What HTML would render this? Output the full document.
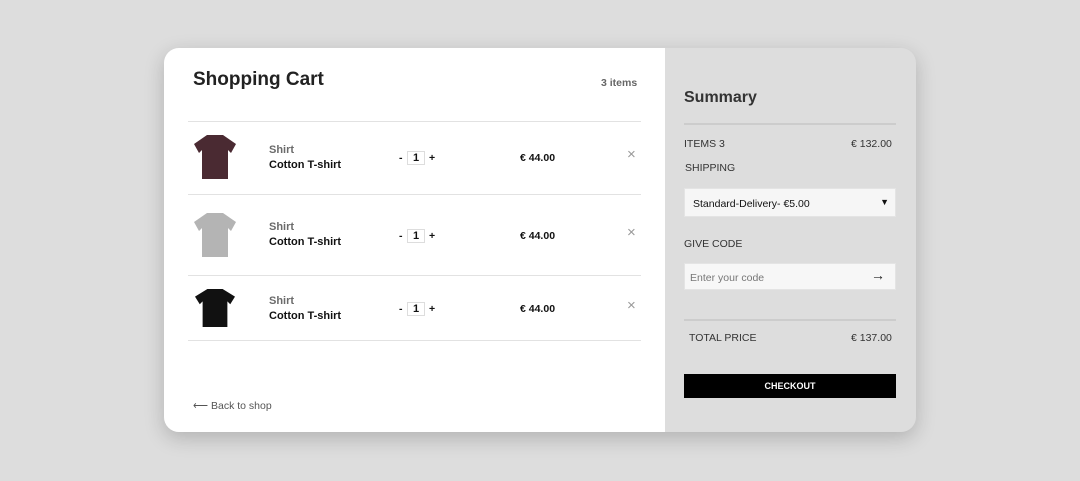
<!DOCTYPE html>
<html><head><meta charset="utf-8"><style>
*{margin:0;padding:0;box-sizing:border-box}
body{width:1080px;height:481px;background:#dddddd;font-family:"Liberation Sans",Arial,sans-serif;position:relative;overflow:hidden}
.card{position:absolute;left:164px;top:48px;width:752px;height:384px;border-radius:15px;overflow:hidden;box-shadow:0 6px 20px rgba(0,0,0,.2);background:#ddd}
.left{position:absolute;left:0;top:0;width:501px;height:384px;background:#fff}
.a{position:absolute;white-space:nowrap}
.hr{position:absolute;height:1px;background:#e2e2e2}
.qty{position:absolute;width:18px;height:14px;border:1px solid #ddd;font-size:11px;font-weight:bold;text-align:center;line-height:12px;color:#111}
.sh{color:#6b6b6b;font-size:11px;font-weight:bold}
.ct{color:#111;font-size:11px;font-weight:bold}
.x{color:#999;font-size:15px}
.pr{font-size:10.5px;font-weight:bold;color:#111}
.lbl{font-size:10.5px;color:#333}
</style></head><body>
<div class="card">
<div class="left">
<div class="a" style="left:29px;top:21px;font-size:19px;font-weight:bold;color:#222">Shopping Cart</div>
<div class="a" style="left:437px;top:29px;font-size:10.5px;font-weight:bold;color:#666">3 items</div>
<div class="hr" style="left:24px;top:73px;width:453px"></div>
<div class="hr" style="left:24px;top:146px;width:453px"></div>
<div class="hr" style="left:24px;top:227px;width:453px"></div>
<div class="hr" style="left:24px;top:292px;width:453px"></div>

<svg class="a" style="left:29px;top:86px" width="44" height="46" viewBox="0 0 44 46"><path d="M14 1 L30 1 L43 10 L38 19 L35 16 L35 45 L9 45 L9 16 L6 19 L1 10 Z" fill="#4a2a32"/></svg>
<svg class="a" style="left:29px;top:164px" width="44" height="46" viewBox="0 0 44 46"><path d="M14 1 L30 1 L43 10 L38 19 L35 16 L35 45 L9 45 L9 16 L6 19 L1 10 Z" fill="#b4b4b4"/></svg>
<svg class="a" style="left:30px;top:240px" width="42" height="40" viewBox="0 0 44 42"><path d="M14 1 L30 1 L43 9 L38 17 L35 14 L35 41 L9 41 L9 14 L6 17 L1 9 Z" fill="#111"/></svg>

<div class="a sh" style="left:105px;top:96px">Shirt</div><div class="a ct" style="left:105px;top:111px">Cotton T-shirt</div>
<div class="a sh" style="left:105px;top:173px">Shirt</div><div class="a ct" style="left:105px;top:188px">Cotton T-shirt</div>
<div class="a sh" style="left:105px;top:247px">Shirt</div><div class="a ct" style="left:105px;top:262px">Cotton T-shirt</div>

<div class="a pr" style="left:235px;top:104px">-</div><div class="qty" style="left:243px;top:103px">1</div><div class="a pr" style="left:265px;top:104px">+</div>
<div class="a pr" style="left:235px;top:182px">-</div><div class="qty" style="left:243px;top:181px">1</div><div class="a pr" style="left:265px;top:182px">+</div>
<div class="a pr" style="left:235px;top:255px">-</div><div class="qty" style="left:243px;top:254px">1</div><div class="a pr" style="left:265px;top:255px">+</div>

<div class="a pr" style="left:356px;top:104px">€ 44.00</div>
<div class="a pr" style="left:356px;top:182px">€ 44.00</div>
<div class="a pr" style="left:356px;top:255px">€ 44.00</div>
<div class="a x" style="left:463px;top:98px">×</div>
<div class="a x" style="left:463px;top:176px">×</div>
<div class="a x" style="left:463px;top:249px">×</div>

<div class="a" style="left:29px;top:352px;font-size:10.5px;color:#555">⟵ Back to shop</div>
</div>
<div class="a" style="left:520px;top:41px;font-size:16px;font-weight:bold;color:#333">Summary</div>
<div class="hr" style="left:520px;top:75px;width:212px;background:#ccc;height:2px"></div>
<div class="a lbl" style="left:520px;top:90px">ITEMS 3</div>
<div class="a lbl" style="left:687px;top:90px">€ 132.00</div>
<div class="a lbl" style="left:521px;top:114px">SHIPPING</div>
<div class="a" style="left:520px;top:140px;width:212px;height:29px;background:#f6f6f6;border:1px solid #e4e4e4;font-size:10.5px;color:#111;padding:9px 0 0 8px">Standard-Delivery- €5.00<span style="position:absolute;right:6px;top:8px;font-size:9px">▼</span></div>
<div class="a lbl" style="left:520px;top:190px">GIVE CODE</div>
<div class="a" style="left:520px;top:215px;width:212px;height:27px;background:#f7f7f7;border:1px solid #e4e4e4;font-size:10.5px;color:#777;padding:8px 0 0 5px">Enter your code<span style="position:absolute;right:10px;top:3px;font-size:14px;color:#222">→</span></div>
<div class="hr" style="left:520px;top:271px;width:212px;background:#ccc;height:2px"></div>
<div class="a lbl" style="left:525px;top:284px">TOTAL PRICE</div>
<div class="a lbl" style="left:687px;top:284px">€ 137.00</div>
<div class="a" style="left:520px;top:326px;width:212px;height:24px;background:#000;color:#fff;font-size:9px;font-weight:bold;text-align:center;line-height:24px">CHECKOUT</div>
</div>
</body></html>
